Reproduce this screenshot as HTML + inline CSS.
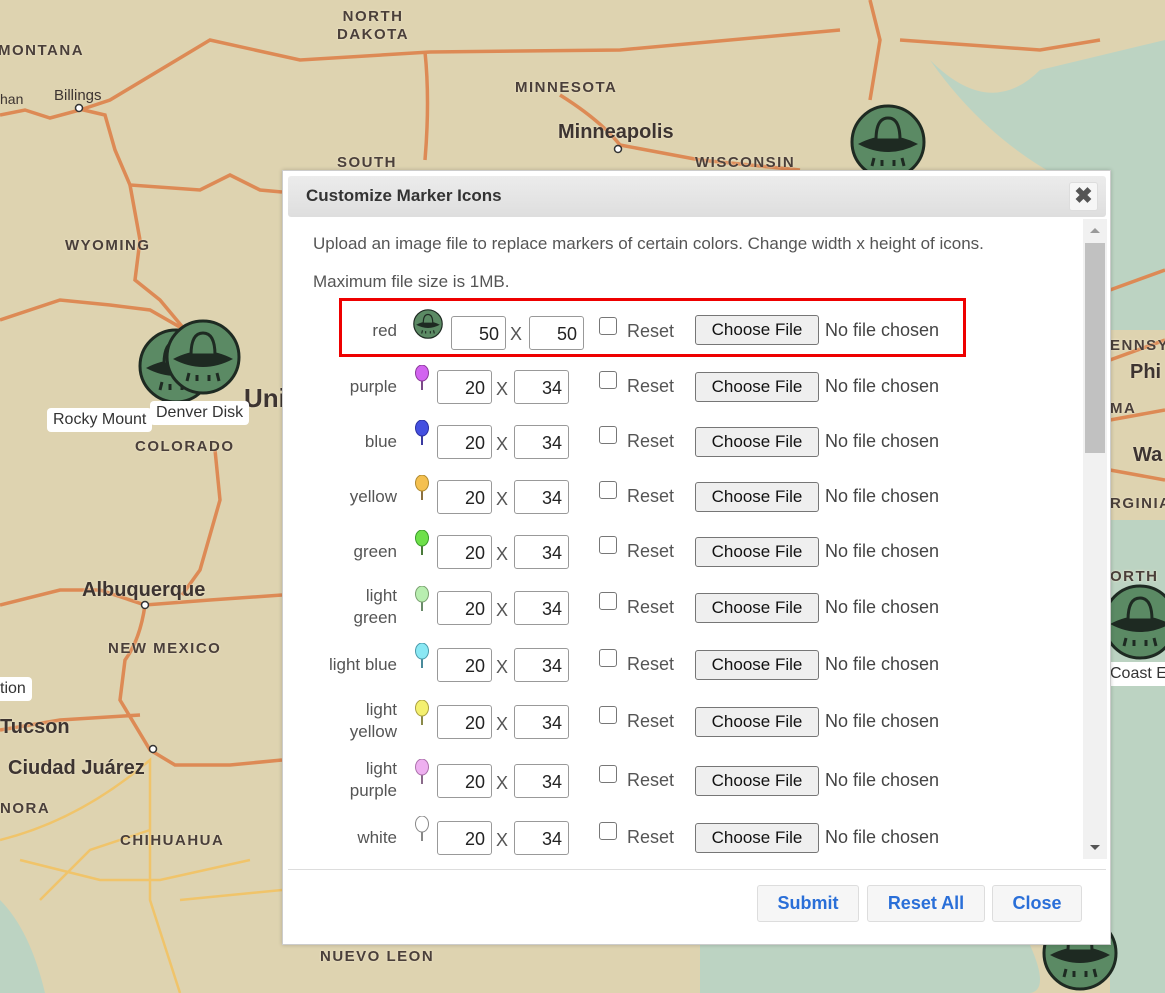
<!DOCTYPE html>
<html><head><meta charset="utf-8"><style>
*{box-sizing:border-box}
body{margin:0;width:1165px;height:993px;overflow:hidden;position:relative;background:#ded3b0;font-family:"Liberation Sans",Arial,sans-serif}
.lbl{position:absolute;font-weight:bold;color:#4a3f3a;letter-spacing:1.5px;font-size:15px;text-shadow:0 0 2px #f3ead0}
.city{position:absolute;color:#3d3431;font-size:20px;font-weight:bold;text-shadow:0 0 2px #f3ead0}
.tag{position:absolute;background:#fff;border-radius:4px;font-size:16px;color:#333;padding:3px 6px;white-space:nowrap}
#dlg{position:absolute;left:282px;top:170px;width:829px;height:775px;background:#fff;border:1px solid #ccc;box-shadow:0 0 4px rgba(0,0,0,.2)}
#hdr{position:absolute;left:5px;top:5px;width:818px;height:41px;background:linear-gradient(#ececec,#dedede);border-radius:3px;font-weight:bold;font-size:17px;color:#333;padding:10px 18px}
#x{position:absolute;right:8px;top:6px;width:29px;height:29px;background:#f6f6f6;border:1px solid #ddd;border-radius:3px;font-size:22px;line-height:26px;text-align:center;color:#555;font-weight:bold}
.t{position:absolute;font-size:17px;color:#555}
.r{position:absolute;left:0;width:800px}
.r .n{position:absolute;right:686px;text-align:right;font-size:17px;color:#555;line-height:22px;white-space:nowrap}
.in{position:absolute;width:55px;height:34px;border:1px solid #999;border-radius:3px;font-size:18px;color:#222;text-align:right;padding:7px 6px 0 0}
.xx{position:absolute;font-size:18px;color:#555}
.cb{position:absolute;width:18px;height:18px;border:1px solid #777;border-radius:3px;background:#fff}
.rs{position:absolute;font-size:18px;color:#555}
.bt{position:absolute;left:412px;width:124px;height:30px;background:#efefef;border:1px solid #767676;border-radius:3px;font-size:17px;color:#111;text-align:center;line-height:27px}
.nf{position:absolute;left:542px;font-size:18px;color:#444}
.pin{position:absolute;left:131px}
.fb{position:absolute;top:714px;height:37px;background:#f6f6f6;border:1px solid #ddd;border-radius:3px;color:#2a6fd8;font-weight:bold;font-size:18px;text-align:center;line-height:35px}
</style></head><body>
<svg width="1165" height="993" style="position:absolute;left:0;top:0">
<defs>
<g id="ufo"><circle r="36" fill="#5b8a64" stroke="#1e2a22" stroke-width="3"/><path d="M-30 2 Q0 -14 30 2 Q0 18 -30 2Z" fill="#1e2a22"/><path d="M-12 -2 Q-12 -24 0 -24 Q12 -24 12 -2Z" fill="#5b8a64" stroke="#1e2a22" stroke-width="3"/><path d="M-14 16 l-2 8 M-6 18 l0 6 M6 18 l0 6 M14 16 l2 8" stroke="#1e2a22" stroke-width="3"/></g>
</defs>
<path d="M930 60 Q990 120 1040 70 L1165 40 L1165 330 L1110 330 L1110 200 Q1000 160 930 60Z" fill="#bcd3c2"/>
<path d="M1110 520 L1165 520 L1165 993 L1110 993Z" fill="#bcd3c2"/>
<path d="M700 945 L1030 945 Q1050 990 1030 993 L700 993Z" fill="#bcd3c2"/>
<path d="M0 900 Q30 930 45 993 L0 993Z" fill="#bcd3c2"/>
<g fill="none" stroke="#dd8a55" stroke-width="3.5">
<path d="M0 115 L25 110 L50 118 L80 110 L110 100 L210 40 L300 60 L430 52 L620 50 L840 30"/>
<path d="M75 108 L105 115 L115 150 L130 185 L200 190 L230 175 L260 190 L282 192"/>
<path d="M130 185 L140 240 L135 280 L160 300 L185 330"/>
<path d="M0 320 L60 300 L110 305 L150 310 L185 330"/>
<path d="M425 52 Q430 100 425 160"/>
<path d="M560 95 Q600 120 620 145 L700 160 L800 170"/>
<path d="M0 605 L60 590 L100 590 L145 605 L210 600 L282 595"/>
<path d="M145 605 Q140 640 125 660 L120 700 L150 750 L175 765 L230 765 L282 760"/>
<path d="M0 730 L60 720 L140 715"/>
<path d="M215 450 L220 500 L200 570 L182 595"/>
<path d="M1110 360 L1165 340 M1110 420 L1165 410 M1110 470 L1165 480 M1110 290 L1165 270"/>
<path d="M870 0 L880 40 L870 100 M900 40 L1040 50 L1100 40"/>
</g>
<g fill="none" stroke="#f0c46a" stroke-width="2.5">
<path d="M0 840 Q80 820 150 760 L150 900 L180 993"/><path d="M20 860 L100 880 L160 880 L250 860"/><path d="M150 830 L90 850 L40 900"/><path d="M180 900 L282 890"/>
</g>
<g fill="#fff" stroke="#333" stroke-width="1.5"><circle cx="79" cy="108" r="3.5"/><circle cx="618" cy="149" r="3.5"/><circle cx="145" cy="605" r="3.5"/><circle cx="153" cy="749" r="3.5"/></g>
<use href="#ufo" x="176" y="366"/><use href="#ufo" x="203" y="357"/><use href="#ufo" x="888" y="142"/><use href="#ufo" x="1140" y="622"/><use href="#ufo" x="1080" y="953"/>
</svg>
<div class="lbl" style="left:337px;top:8px;text-align:center;line-height:18px">NORTH<br>DAKOTA</div>
<div class="lbl" style="left:-2px;top:42px">MONTANA</div>
<div class="lbl" style="left:65px;top:237px">WYOMING</div>
<div class="lbl" style="left:337px;top:154px">SOUTH</div>
<div class="lbl" style="left:515px;top:79px">MINNESOTA</div>
<div class="lbl" style="left:695px;top:154px">WISCONSIN</div>
<div class="lbl" style="left:135px;top:438px">COLORADO</div>
<div class="lbl" style="left:108px;top:640px">NEW MEXICO</div>
<div class="lbl" style="left:120px;top:832px">CHIHUAHUA</div>
<div class="lbl" style="left:0px;top:800px">NORA</div>
<div class="lbl" style="left:320px;top:948px">NUEVO LEON</div>
<div class="lbl" style="left:1110px;top:337px">ENNSY</div>
<div class="lbl" style="left:1110px;top:400px">MA</div>
<div class="lbl" style="left:1110px;top:495px">RGINIA</div>
<div class="lbl" style="left:1110px;top:568px">ORTH</div>
<div style="position:absolute;left:54px;top:87px;font-size:15px;color:#3d3431">Billings</div>
<div style="position:absolute;left:0;top:91px;font-size:14px;color:#3d3431">han</div>
<div class="city" style="left:558px;top:121px">Minneapolis</div>
<div class="city" style="left:82px;top:579px">Albuquerque</div>
<div class="city" style="left:0;top:716px">Tucson</div>
<div class="city" style="left:8px;top:757px">Ciudad Juárez</div>
<div class="city" style="left:1130px;top:361px">Phi</div>
<div class="city" style="left:1133px;top:444px">Wa</div>
<div class="city" style="left:244px;top:383px;font-size:26px">Uni</div>
<div class="tag" style="left:47px;top:408px">Rocky Mount</div>
<div class="tag" style="left:150px;top:401px;background:#fff">Denver Disk</div>
<div class="tag" style="left:-6px;top:677px">tion</div>
<div class="tag" style="left:1104px;top:662px">Coast Er</div>
<div id="dlg">
<div id="hdr">Customize Marker Icons<div id="x">✖</div></div>
<div style="position:absolute;left:800px;top:48px;width:24px;height:640px;background:#f1f1f1"><div style="position:absolute;left:2px;top:24px;width:20px;height:210px;background:#c1c1c1"></div><div style="position:absolute;left:7px;top:9px;border:5px solid transparent;border-bottom-color:#999;border-top:0"></div><div style="position:absolute;left:7px;bottom:9px;border:5px solid transparent;border-top-color:#555;border-bottom:0"></div></div>
<div class="t" style="left:30px;top:63px">Upload an image file to replace markers of certain colors. Change width x height of icons.</div>
<div class="t" style="left:30px;top:101px">Maximum file size is 1MB.</div>
<div style="position:absolute;left:56px;top:127px;width:627px;height:59px;border:3px solid #e00"></div>
<div class="r" style="top:144px"><div class="n" style="top:5px;right:686px">red</div>
<svg style="position:absolute;left:130px;top:-6px" width="30" height="30" viewBox="-38 -38 76 76"><use href="#ufo"/></svg>
<div class="in" style="left:168px;top:1px">50</div><div class="xx" style="left:227px;top:9px">X</div><div class="in" style="left:246px;top:1px">50</div>
<div class="cb" style="left:316px;top:2px"></div><div class="rs" style="left:344px;top:6px">Reset</div>
<div class="bt" style="top:0">Choose File</div><div class="nf" style="top:5px">No file chosen</div></div>
<div class="r" style="top:199px"><div class="n" style="top:6px">purple</div><svg class="pin" width="16" height="26" style="top:-5px"><path d="M8 25 V16" stroke="#7a4a86" stroke-width="2"/><ellipse cx="8" cy="8" rx="6.5" ry="8" fill="#d264f0" stroke="#8a3a9a"/></svg><div class="in" style="left:154px">20</div><div class="xx" style="left:213px;top:9px">X</div><div class="in" style="left:231px">34</div><div class="cb" style="left:316px;top:1px"></div><div class="rs" style="left:344px;top:6px">Reset</div><div class="bt" style="top:2px">Choose File</div><div class="nf" style="top:6px">No file chosen</div></div>
<div class="r" style="top:254px"><div class="n" style="top:6px">blue</div><svg class="pin" width="16" height="26" style="top:-5px"><path d="M8 25 V16" stroke="#3a3aa0" stroke-width="2"/><ellipse cx="8" cy="8" rx="6.5" ry="8" fill="#4450e0" stroke="#2a30a0"/></svg><div class="in" style="left:154px">20</div><div class="xx" style="left:213px;top:9px">X</div><div class="in" style="left:231px">34</div><div class="cb" style="left:316px;top:1px"></div><div class="rs" style="left:344px;top:6px">Reset</div><div class="bt" style="top:2px">Choose File</div><div class="nf" style="top:6px">No file chosen</div></div>
<div class="r" style="top:309px"><div class="n" style="top:6px">yellow</div><svg class="pin" width="16" height="26" style="top:-5px"><path d="M8 25 V16" stroke="#8a7040" stroke-width="2"/><ellipse cx="8" cy="8" rx="6.5" ry="8" fill="#f4c050" stroke="#b08a30"/></svg><div class="in" style="left:154px">20</div><div class="xx" style="left:213px;top:9px">X</div><div class="in" style="left:231px">34</div><div class="cb" style="left:316px;top:1px"></div><div class="rs" style="left:344px;top:6px">Reset</div><div class="bt" style="top:2px">Choose File</div><div class="nf" style="top:6px">No file chosen</div></div>
<div class="r" style="top:364px"><div class="n" style="top:6px">green</div><svg class="pin" width="16" height="26" style="top:-5px"><path d="M8 25 V16" stroke="#4a7a3a" stroke-width="2"/><ellipse cx="8" cy="8" rx="6.5" ry="8" fill="#6ee04a" stroke="#3a9a2a"/></svg><div class="in" style="left:154px">20</div><div class="xx" style="left:213px;top:9px">X</div><div class="in" style="left:231px">34</div><div class="cb" style="left:316px;top:1px"></div><div class="rs" style="left:344px;top:6px">Reset</div><div class="bt" style="top:2px">Choose File</div><div class="nf" style="top:6px">No file chosen</div></div>
<div class="r" style="top:420px"><div class="n" style="top:-6px">light<br>green</div><svg class="pin" width="16" height="26" style="top:-5px"><path d="M8 25 V16" stroke="#6a8a6a" stroke-width="2"/><ellipse cx="8" cy="8" rx="6.5" ry="8" fill="#b8eeb0" stroke="#7aa070"/></svg><div class="in" style="left:154px">20</div><div class="xx" style="left:213px;top:9px">X</div><div class="in" style="left:231px">34</div><div class="cb" style="left:316px;top:1px"></div><div class="rs" style="left:344px;top:6px">Reset</div><div class="bt" style="top:2px">Choose File</div><div class="nf" style="top:6px">No file chosen</div></div>
<div class="r" style="top:477px"><div class="n" style="top:6px">light blue</div><svg class="pin" width="16" height="26" style="top:-5px"><path d="M8 25 V16" stroke="#4a8a9a" stroke-width="2"/><ellipse cx="8" cy="8" rx="6.5" ry="8" fill="#8ae8f4" stroke="#4a9aaa"/></svg><div class="in" style="left:154px">20</div><div class="xx" style="left:213px;top:9px">X</div><div class="in" style="left:231px">34</div><div class="cb" style="left:316px;top:1px"></div><div class="rs" style="left:344px;top:6px">Reset</div><div class="bt" style="top:2px">Choose File</div><div class="nf" style="top:6px">No file chosen</div></div>
<div class="r" style="top:534px"><div class="n" style="top:-6px">light<br>yellow</div><svg class="pin" width="16" height="26" style="top:-5px"><path d="M8 25 V16" stroke="#8a8a4a" stroke-width="2"/><ellipse cx="8" cy="8" rx="6.5" ry="8" fill="#f4f070" stroke="#aaa040"/></svg><div class="in" style="left:154px">20</div><div class="xx" style="left:213px;top:9px">X</div><div class="in" style="left:231px">34</div><div class="cb" style="left:316px;top:1px"></div><div class="rs" style="left:344px;top:6px">Reset</div><div class="bt" style="top:2px">Choose File</div><div class="nf" style="top:6px">No file chosen</div></div>
<div class="r" style="top:593px"><div class="n" style="top:-6px">light<br>purple</div><svg class="pin" width="16" height="26" style="top:-5px"><path d="M8 25 V16" stroke="#8a6a8a" stroke-width="2"/><ellipse cx="8" cy="8" rx="6.5" ry="8" fill="#eeb0f0" stroke="#aa70aa"/></svg><div class="in" style="left:154px">20</div><div class="xx" style="left:213px;top:9px">X</div><div class="in" style="left:231px">34</div><div class="cb" style="left:316px;top:1px"></div><div class="rs" style="left:344px;top:6px">Reset</div><div class="bt" style="top:2px">Choose File</div><div class="nf" style="top:6px">No file chosen</div></div>
<div class="r" style="top:650px"><div class="n" style="top:6px">white</div><svg class="pin" width="16" height="26" style="top:-5px"><path d="M8 25 V16" stroke="#888" stroke-width="2"/><ellipse cx="8" cy="8" rx="6.5" ry="8" fill="#fff" stroke="#888"/></svg><div class="in" style="left:154px">20</div><div class="xx" style="left:213px;top:9px">X</div><div class="in" style="left:231px">34</div><div class="cb" style="left:316px;top:1px"></div><div class="rs" style="left:344px;top:6px">Reset</div><div class="bt" style="top:2px">Choose File</div><div class="nf" style="top:6px">No file chosen</div></div>
<div style="position:absolute;left:5px;top:698px;width:818px;height:1px;background:#ddd"></div>
<div class="fb" style="left:474px;width:102px">Submit</div>
<div class="fb" style="left:584px;width:118px">Reset All</div>
<div class="fb" style="left:709px;width:90px">Close</div>
</div>
</body></html>
